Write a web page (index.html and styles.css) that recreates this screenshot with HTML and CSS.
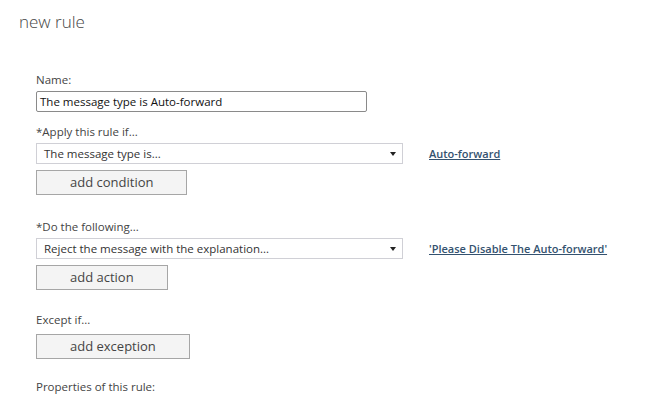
FILE: index.html
```html
<!DOCTYPE html>
<html>
<head>
<meta charset="utf-8">
<link rel="stylesheet" href="styles.css">
</head>
<body>
<div class="page">
  <h1 class="title">new rule</h1>
  <div class="form">
    <div class="label label-name">Name:</div>
    <div class="textbox">The message type is Auto-forward</div>

    <div class="label label-apply">*Apply this rule if...</div>
    <div class="row">
      <div class="select"><span class="select-text">The message type is...</span><span class="arrow"></span></div>
      <a class="link" href="#">Auto-forward</a>
    </div>
    <div class="btn">add condition</div>

    <div class="label label-do">*Do the following...</div>
    <div class="row">
      <div class="select"><span class="select-text">Reject the message with the explanation...</span><span class="arrow"></span></div>
      <a class="link" href="#">'Please Disable The Auto-forward'</a>
    </div>
    <div class="btn">add action</div>

    <div class="label label-except">Except if...</div>
    <div class="btn">add exception</div>

    <div class="label label-props">Properties of this rule:</div>
  </div>
</div>
</body>
</html>
```

FILE: styles.css
```css
html, body {
  margin: 0;
  padding: 0;
  background: #ffffff;
}

body {
  font-family: "Open Sans", "Noto Sans", "Liberation Sans", sans-serif;
  font-size: 12px;
  color: #333333;
}

.page {
  width: 664px;
  height: 402px;
  overflow: hidden;
}

.title {
  margin: 0;
  padding: 9px 0 0 19px;
  font-size: 17px;
  font-weight: 300;
  line-height: 26px;
  color: #444444;
}

.form {
  padding-left: 36px;
  display: flex;
  flex-direction: column;
  align-items: flex-start;
}

.label {
  font-size: 11.5px;
  line-height: 16px;
  color: #444444;
}

.label-name { margin-top: 37px; }
.label-apply { margin-top: 12px; }
.label-do { margin-top: 24px; }
.label-except { margin-top: 22px; }
.label-props { margin-top: 20px; }

.textbox {
  margin-top: 3px;
  box-sizing: border-box;
  width: 331px;
  height: 21px;
  border: 1px solid #8a8a8a;
  border-radius: 2px;
  padding: 0 3px;
  font-size: 11.5px;
  line-height: 19px;
  color: #111111;
}

.row {
  margin-top: 3px;
  display: flex;
  align-items: center;
  gap: 26px;
}

.select {
  box-sizing: border-box;
  width: 367px;
  height: 21px;
  border: 1px solid #d0d0d6;
  background: #ffffff;
  display: flex;
  align-items: center;
  justify-content: space-between;
  padding: 0 6px 0 7px;
}

.select-text {
  font-size: 11.5px;
  color: #333333;
}

.arrow {
  width: 0;
  height: 0;
  border-left: 3.5px solid transparent;
  border-right: 3.5px solid transparent;
  border-top: 4px solid #222222;
}

.link {
  font-size: 11px;
  font-weight: 600;
  color: #34526f;
  text-decoration: underline;
}

.btn {
  margin-top: 6px;
  box-sizing: border-box;
  height: 25px;
  padding: 0 33px;
  border: 1px solid #a6a6a6;
  background: #f4f4f4;
  font-size: 13px;
  line-height: 23px;
  color: #444444;
  text-align: center;
}
```
